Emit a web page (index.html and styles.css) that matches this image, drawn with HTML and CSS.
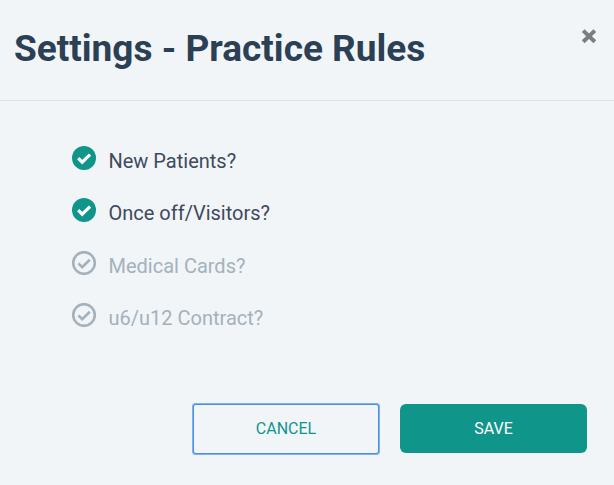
FILE: index.html
```html
<!DOCTYPE html>
<html lang="en">
<head>
<meta charset="utf-8">
<title>Settings - Practice Rules</title>
<link rel="stylesheet" href="styles.css">
</head>
<body>
<div class="modal">
  <header class="modal-header">
    <h1 class="modal-title">Settings - Practice Rules</h1>
    <button class="close" type="button" aria-label="Close">
      <svg class="close-icon" viewBox="0 0 16 16" width="16" height="16"><path d="M2.2 2.6 13.8 13.8M13.8 2.6 2.2 13.8"/></svg>
    </button>
  </header>
  <ul class="rules">
    <li class="rule rule-on">
      <svg class="check" viewBox="0 0 24 24" width="24" height="24"><circle class="disc" cx="12" cy="12" r="12"/><path class="tick" d="M6.2 12.2 10.2 16.2 18 8.6"/></svg>
      <span>New Patients?</span>
    </li>
    <li class="rule rule-on">
      <svg class="check" viewBox="0 0 24 24" width="24" height="24"><circle class="disc" cx="12" cy="12" r="12"/><path class="tick" d="M6.2 12.2 10.2 16.2 18 8.6"/></svg>
      <span>Once off/Visitors?</span>
    </li>
    <li class="rule rule-off">
      <svg class="check" viewBox="0 0 24 24" width="24" height="24"><circle class="ring" cx="12" cy="12" r="10.8"/><path class="tick" d="M6.4 12.4 10.2 16.2 17.8 8.8"/></svg>
      <span>Medical Cards?</span>
    </li>
    <li class="rule rule-off">
      <svg class="check" viewBox="0 0 24 24" width="24" height="24"><circle class="ring" cx="12" cy="12" r="10.8"/><path class="tick" d="M6.4 12.4 10.2 16.2 17.8 8.8"/></svg>
      <span>u6/u12 Contract?</span>
    </li>
  </ul>
  <footer class="actions">
    <button class="btn btn-cancel" type="button">CANCEL</button>
    <button class="btn btn-save" type="button">SAVE</button>
  </footer>
</div>
</body>
</html>
```

FILE: styles.css
```css
html, body {
  margin: 0;
  padding: 0;
  height: 100%;
  background: #f1f5f8;
}

.modal {
  box-sizing: border-box;
  height: 485px;
  padding-top: 1px;
  font-family: Roboto, "Liberation Sans", sans-serif;
  background: #f1f5f8;
  display: flex;
  flex-direction: column;
}

.modal-header {
  box-sizing: border-box;
  height: 100px;
  padding: 0 15px;
  border-bottom: 1px solid #dee2e6;
  display: flex;
  justify-content: space-between;
  align-items: flex-start;
}

.modal-title {
  margin: 26px 0 0 -1px;
  font-size: 37px;
  line-height: 44px;
  font-weight: 700;
  color: #2b3f55;
}

.close {
  margin: 27px 2px 0 0;
  padding: 0;
  border: 0;
  background: none;
  width: 16px;
  height: 16px;
}

.close-icon {
  display: block;
  fill: none;
  stroke: #7b7e80;
  stroke-width: 4;
}

.rules {
  list-style: none;
  margin: 0;
  padding: 44.9px 0 0 72px;
  display: flex;
  flex-direction: column;
  gap: 28.5px;
}

.rule {
  display: flex;
  align-items: center;
  gap: 13px;
  height: 24px;
  font-size: 20px;
  line-height: 24px;
}

.check {
  flex: none;
  display: block;
  margin-left: -0.5px;
}

.rule span {
  position: relative;
  top: 3px;
}

.rule-on { color: #3e4a5c; }
.rule-off { color: #a5b1bb; }

.disc { fill: #10958a; }
.ring { fill: none; stroke: #a5b1bb; stroke-width: 2.6; }

.tick { fill: none; stroke-width: 3.2; }
.rule-on .tick { stroke: #ffffff; }
.rule-off .tick { stroke: #a5b1bb; stroke-width: 2.6; }

.actions {
  margin-top: auto;
  padding: 0 27px 30px 192px;
  display: flex;
  justify-content: space-between;
  align-items: flex-start;
}

.btn {
  box-sizing: border-box;
  font-family: inherit;
  font-size: 16px;
  border-radius: 6px;
  padding: 0;
  text-transform: uppercase;
}

.btn-cancel {
  position: relative;
  width: 188px;
  height: 52px;
  padding-bottom: 2px;
  border: 1px solid #10958a;
  background: #f1f5f8;
  color: #10958a;
}

.btn-cancel::after {
  content: "";
  position: absolute;
  inset: -1px;
  border: 1px solid #7fb0f0;
  border-radius: 3px;
  box-shadow: inset 0 0 0 1px #4a90e6;
}

.btn-save {
  margin-top: 1px;
  width: 187px;
  height: 49px;
  border: 0;
  background: #10958a;
  color: #ffffff;
}
```
